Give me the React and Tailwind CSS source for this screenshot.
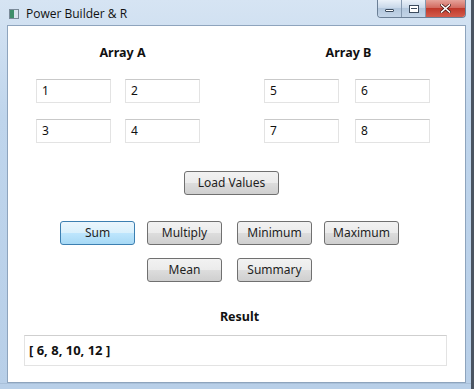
import React from "react";

const Btn = ({ label, active }) => (
  <button
    className={
      "w-[75px] h-[24px] rounded-[3px] border text-[12px] text-[#1e1e1e] leading-none " +
      (active
        ? "border-[#3c7fb1] bg-[linear-gradient(#eaf6fd_0%,#d9f0fc_50%,#bee6fd_50%,#a7d9f5_100%)]"
        : "border-[#707070] bg-[linear-gradient(#f2f2f2_0%,#ebebeb_50%,#dddddd_50%,#cfcfcf_100%)]")
    }
  >
    {label}
  </button>
);

const Field = ({ value }) => (
  <div className="w-[75px] h-[24px] border border-[#e3e3e3] border-t-[#c9c9c9] bg-white flex items-center pl-[5px] text-[12px] text-[#111]">
    {value}
  </div>
);

export default function App() {
  return (
    <div
      className="w-[474px] h-[389px] bg-[linear-gradient(#d6e4f3,#bfd5ec_30%,#b8cfe8)] flex flex-col overflow-hidden border-r-[3px] border-r-[#4a5461]"
      style={{ fontFamily: "'Noto Sans', 'DejaVu Sans', sans-serif" }}
    >
      {/* title bar */}
      <div className="h-[25px] flex items-start shrink-0">
        <div className="flex items-center gap-[7px] pl-[9px] pt-[8px]">
          <div className="w-[10px] h-[10px] border border-[#7a8a99] bg-[linear-gradient(90deg,#3f8f6a_0_50%,#d9e4ee_50%)]" />
          <span className="text-[12px] leading-none text-[#111]" style={{ fontFamily: "'Open Sans', sans-serif" }}>
            Power Builder &amp; R
          </span>
        </div>
        <div className="ml-auto mr-[5px] flex h-[18px] rounded-b-[4px] border border-t-0 border-[#6b7f96] overflow-hidden">
          <div className="w-[24px] flex items-center justify-center bg-[linear-gradient(#eaf1f9,#c6d6e8_50%,#b3c7dd_50%,#c4d5e8)] border-r border-[#8599b0]">
            <div className="w-[9px] h-[3px] border border-[#3b4b5e] bg-white rounded-[1px] mt-[4px]" />
          </div>
          <div className="w-[24px] flex items-center justify-center bg-[linear-gradient(#eaf1f9,#c6d6e8_50%,#b3c7dd_50%,#c4d5e8)] border-r border-[#8599b0]">
            <div className="w-[10px] h-[8px] border border-[#3b4b5e] bg-white flex items-center justify-center">
              <div className="w-[6px] h-[2px] border-t border-[#3b4b5e]" />
            </div>
          </div>
          <div className="w-[39px] flex items-center justify-center bg-[linear-gradient(#e6a39a,#d0655a_50%,#c0392b_50%,#d45c4c)]">
            <svg width="11" height="9" viewBox="0 0 11 9">
              <path d="M1.5 1 L9.5 8 M9.5 1 L1.5 8" stroke="#4a1712" strokeWidth="3" strokeLinecap="square" />
              <path d="M1.5 1 L9.5 8 M9.5 1 L1.5 8" stroke="#fff" strokeWidth="1.6" strokeLinecap="square" />
            </svg>
          </div>
        </div>
      </div>

      {/* client area */}
      <div className="ml-[7px] mr-[5px] h-[358px] border border-[#8ea4bd] bg-white flex flex-col">
        <div className="flex mt-[18px] h-[18px] items-center text-[12.5px] font-bold text-[#111]">
          <div className="w-[119px] ml-[55px] text-center">Array A</div>
          <div className="w-[119px] ml-[107px] text-center">Array B</div>
        </div>

        <div className="flex flex-col gap-[16px] mt-[17px]">
          <div className="flex">
            <div className="ml-[28px] flex gap-[14px]">
              <Field value="1" />
              <Field value="2" />
            </div>
            <div className="ml-[64px] flex gap-[16px]">
              <Field value="5" />
              <Field value="6" />
            </div>
          </div>
          <div className="flex">
            <div className="ml-[28px] flex gap-[14px]">
              <Field value="3" />
              <Field value="4" />
            </div>
            <div className="ml-[64px] flex gap-[16px]">
              <Field value="7" />
              <Field value="8" />
            </div>
          </div>
        </div>

        <div className="flex mt-[28px] ml-[176px]">
          <button className="w-[95px] h-[24px] rounded-[3px] border border-[#707070] bg-[linear-gradient(#f2f2f2_0%,#ebebeb_50%,#dddddd_50%,#cfcfcf_100%)] text-[12px] text-[#1e1e1e]">
            Load Values
          </button>
        </div>

        <div className="flex ml-[52px] gap-[12px] mt-[26px]">
          <Btn label="Sum" active />
          <div className="flex gap-[15px]">
            <Btn label="Multiply" />
            <Btn label="Minimum" />
          </div>
          <Btn label="Maximum" />
        </div>
        <div className="flex ml-[139px] gap-[15px] mt-[13px]">
          <Btn label="Mean" />
          <Btn label="Summary" />
        </div>

        <div className="text-center mt-[26px] text-[12.5px] font-bold text-[#111] pl-[6px]">Result</div>

        <div className="ml-[16px] mr-[18px] mt-[8px] h-[31px] border border-[#e3e3e3] border-t-[#cfcfcf] flex items-center pl-[4px] text-[13px] font-bold text-[#111]">
          [ 6, 8, 10, 12 ]
        </div>
      </div>
      <div className="flex-1 border-t border-[#a9c0d9]" />
    </div>
  );
}
